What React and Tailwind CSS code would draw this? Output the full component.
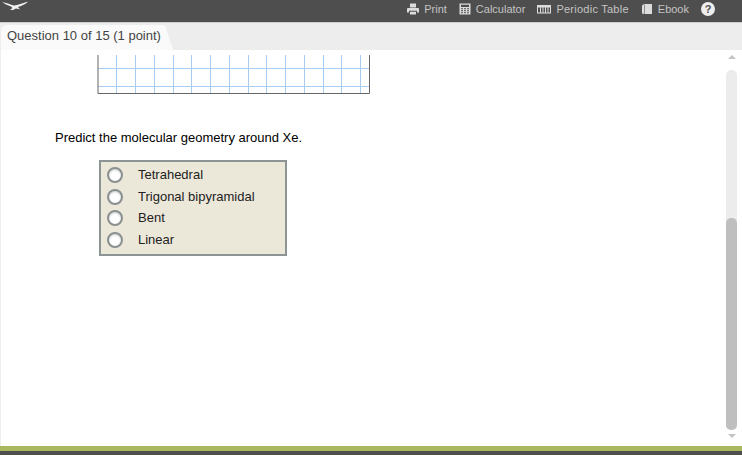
import React from "react";

const xs = [116, 135, 154, 173, 191, 210, 229, 248, 266, 285, 304, 323, 341, 360];

function Icon({ children, w = 12 }) {
  return (
    <svg width={w} height="12" viewBox={`0 0 ${w} 12`} className="shrink-0" fill="#dcdcdc">
      {children}
    </svg>
  );
}

function Tool({ label, icon, className = "" }) {
  return (
    <div className={`flex items-center gap-[5px] ${className}`}>
      {icon}
      <span>{label}</span>
    </div>
  );
}

function Option({ label }) {
  return (
    <div className="flex h-[21.75px] items-center">
      <span className="ml-[6px] block h-[16px] w-[16px] shrink-0 rounded-full border-[2.5px] border-[#8a8f8f] bg-white shadow-[inset_0_1px_2px_#ccc]" />
      <span className="ml-[15px]">{label}</span>
    </div>
  );
}

export default function App() {
  return (
    <div className="flex h-[455px] w-[742px] flex-col overflow-hidden bg-white font-['Liberation_Sans',Arial,sans-serif] text-[13px] text-[#111]">
      <header className="flex h-[22px] shrink-0 items-start justify-between bg-[#4e4e4e] pl-[1px] text-[11px] leading-[16px] text-[#c4c4c4]">
        <svg width="28" height="12" viewBox="0 0 28 12" className="shrink-0" fill="#f0f0f0">
          <path d="M1 2 L7 3.500 L11 5 L13 5.500 L16 5 L21 3.500 L27 1.500 L25 3.500 L20 6 L17 7 L18 8.500 L19.500 9.500 L15 8.500 L12 10 L9 10 L11.500 8 L10 6.500 L5 4.500 Z" />
        </svg>
        <div className="mr-[27px] mt-[1px] flex items-center gap-[12px]">
          <Tool
            label="Print"
            icon={
              <Icon>
                <path d="M3 .5h6v4H3zM1 5h10a1 1 0 0 1 1 1v3.500h-2V7.800H2v1.700H0V6a1 1 0 0 1 1-1zM3 8.800h6v2.700H3z" />
              </Icon>
            }
          />
          <Tool
            label="Calculator"
            icon={
              <Icon>
                <path fillRule="evenodd" d="M.5.500h11v11H.5zM2 1.800V4h8V1.800zM2 5.200v1.100h2V5.200zM5 5.200v1.100h2V5.200zM8 5.200v1.100h2V5.200zM2 7.200v1.100h2V7.200zM5 7.200v1.100h2V7.200zM8 7.200v1.100h2V7.200zM2 9.200v1.100h2V9.200zM5 9.200v1.100h2V9.200zM8 9.200v1.100h2V9.200z" />
              </Icon>
            }
          />
          <Tool
            label="Periodic Table"
            className="tracking-[0.25px]"
            icon={
              <Icon w={14}>
                <path fillRule="evenodd" d="M0 2h14v8.500H0zM1 4.500v5h2v-5zM4 4.500v5h1.500v-5zM6.500 4.500v5H8v-5zM9 4.500v5h1.500v-5zM11.500 4.500v5H13v-5z" />
              </Icon>
            }
          />
          <Tool
            label="Ebook"
            icon={
              <Icon>
                <path d="M1 2.500 L3 1 H11 V11 H3 L1 10.500 Z" />
                <path d="M3.500 1.500v9.500" stroke="#7a7a7a" strokeWidth="0.800" />
              </Icon>
            }
          />
          <span className="flex h-[14px] w-[14px] items-center justify-center rounded-full bg-[#eeeeee] text-[11px] font-bold leading-none text-[#4e4e4e]">
            ?
          </span>
        </div>
      </header>

      <div className="h-px shrink-0 bg-[#cfcfcf]" />

      <div className="flex h-[27px] shrink-0 items-end bg-[#ededed] pl-px">
        <div className="relative flex h-[25px] w-[161px] items-center rounded-tl-[6px] bg-[#fafafa] pb-[3px] pl-[6px] text-[#444]">
          Question 10 of 15 (1 point)
          <svg className="absolute left-full top-0" width="11" height="25" viewBox="0 0 11 25">
            <path d="M0 0 H0.500 Q3 0 4 3 L11 25 H0 Z" fill="#fafafa" />
          </svg>
        </div>
      </div>

      <main className="relative min-h-0 flex-1 rounded-tr-[6px] border-l border-[#eee] bg-white">
        <svg className="ml-[96px] mt-[5px] block" width="274" height="39" viewBox="97 55 274 39">
          {xs.map((x) => (
            <line key={x} x1={x + 0.5} x2={x + 0.5} y1="55" y2="93" stroke="#a6ccf2" />
          ))}
          <line x1="98" x2="369" y1="68.500" y2="68.500" stroke="#a6ccf2" />
          <line x1="98" x2="369" y1="86.500" y2="86.500" stroke="#a6ccf2" />
          <path d="M98 55V93.500H369.500V55" fill="none" stroke="#666" />
        </svg>

        <p className="ml-[54px] mt-[36px] leading-[16px] text-black">Predict the molecular geometry around Xe.</p>

        <div className="ml-[98px] mt-[14px] h-[96px] w-[188px] border-2 border-[#8c9494] bg-[#ece8d9] pt-[2px] text-[#222] leading-[16px]">
          <Option label="Tetrahedral" />
          <Option label="Trigonal bipyramidal" />
          <Option label="Bent" />
          <Option label="Linear" />
        </div>

        <div className="absolute bottom-[8px] right-[5px] top-[5px] flex w-[11px] flex-col items-center">
          <span className="h-0 w-0 border-x-[4px] border-b-[4px] border-x-transparent border-b-[#c4c4c4]" />
          <div className="mt-[11px] flex min-h-0 w-full flex-1 flex-col justify-end rounded-[5px] bg-[#ececec]">
            <div className="h-[212px] rounded-[5px] bg-[#bfbfbf]" />
          </div>
          <span className="mt-[4px] h-0 w-0 border-x-[4px] border-t-[4px] border-x-transparent border-t-[#c4c4c4]" />
        </div>
      </main>

      <div className="h-[5px] shrink-0 bg-[#a9b85f]" />
      <div className="h-[4px] shrink-0 bg-[#4e4e4e]" />
    </div>
  );
}
